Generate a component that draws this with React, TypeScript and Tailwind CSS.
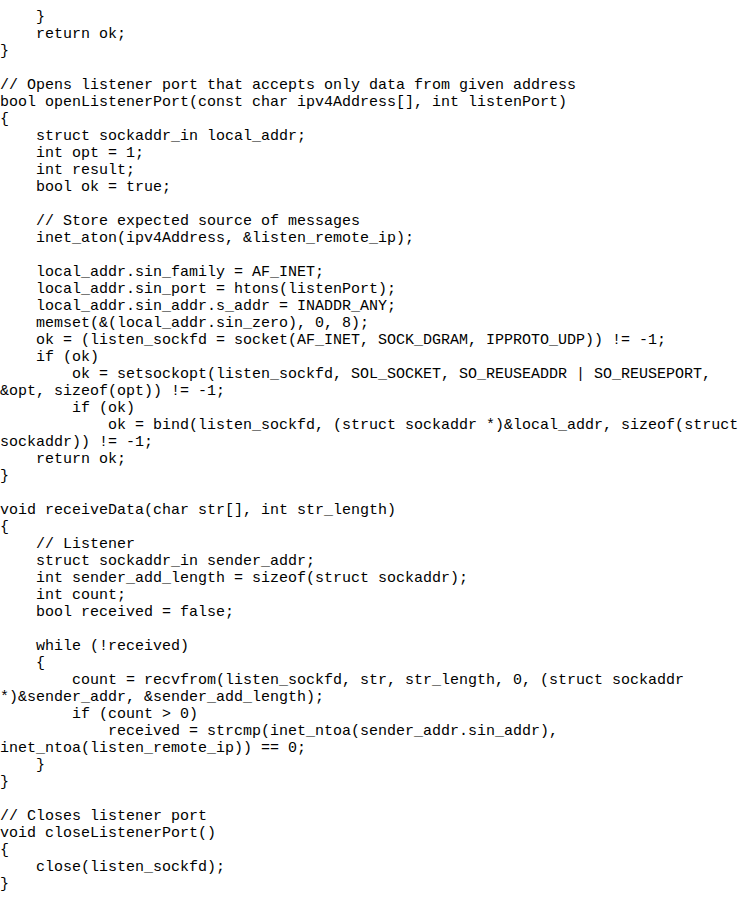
import React from "react";

const code = `    }
    return ok;
}

// Opens listener port that accepts only data from given address
bool openListenerPort(const char ipv4Address[], int listenPort)
{
    struct sockaddr_in local_addr;
    int opt = 1;
    int result;
    bool ok = true;

    // Store expected source of messages
    inet_aton(ipv4Address, &listen_remote_ip);

    local_addr.sin_family = AF_INET;
    local_addr.sin_port = htons(listenPort);
    local_addr.sin_addr.s_addr = INADDR_ANY;
    memset(&(local_addr.sin_zero), 0, 8);
    ok = (listen_sockfd = socket(AF_INET, SOCK_DGRAM, IPPROTO_UDP)) != -1;
    if (ok)
        ok = setsockopt(listen_sockfd, SOL_SOCKET, SO_REUSEADDR | SO_REUSEPORT, &opt, sizeof(opt)) != -1;
        if (ok)
            ok = bind(listen_sockfd, (struct sockaddr *)&local_addr, sizeof(struct sockaddr)) != -1;
    return ok;
}

void receiveData(char str[], int str_length)
{
    // Listener
    struct sockaddr_in sender_addr;
    int sender_add_length = sizeof(struct sockaddr);
    int count;
    bool received = false;

    while (!received)
    {
        count = recvfrom(listen_sockfd, str, str_length, 0, (struct sockaddr *)&sender_addr, &sender_add_length);
        if (count > 0)
            received = strcmp(inet_ntoa(sender_addr.sin_addr), inet_ntoa(listen_remote_ip)) == 0;
    }
}

// Closes listener port
void closeListenerPort()
{
    close(listen_sockfd);
}`;

const App: React.FC = () => {
  return (
    <div className="min-h-screen w-full bg-white">
      <pre className="m-0 whitespace-pre-wrap pt-[9px] font-['Liberation_Mono',monospace] text-[15px] leading-[17px] text-black">
        {code}
      </pre>
    </div>
  );
};

export default App;
